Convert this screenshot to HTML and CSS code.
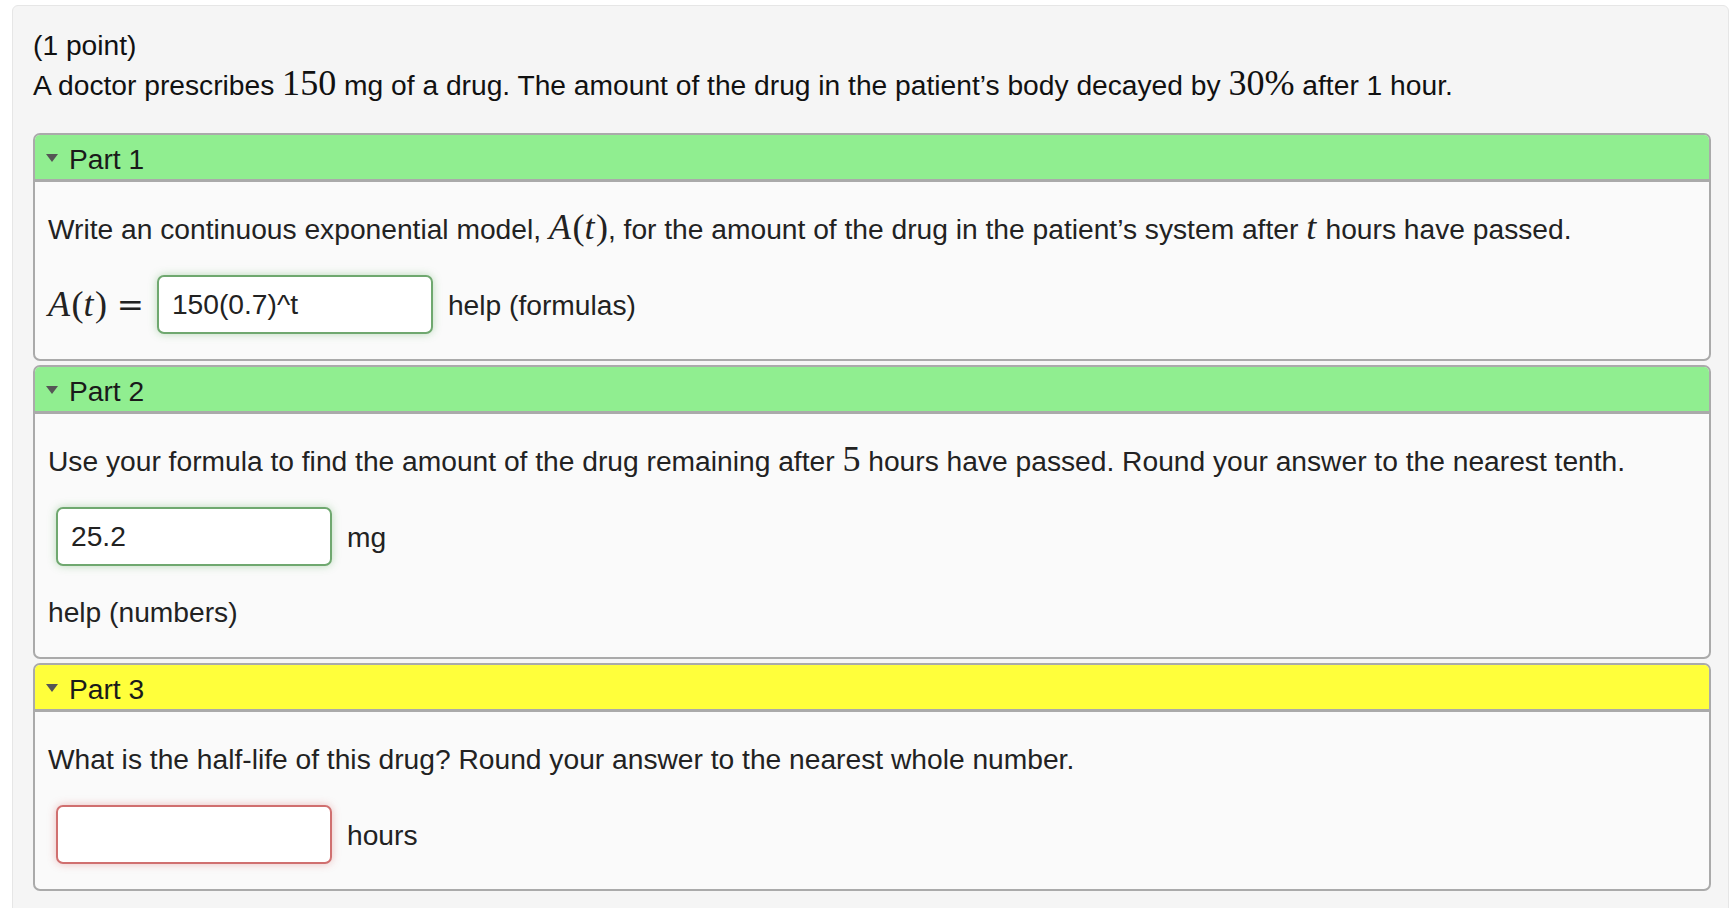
FILE: index.html
```html
<!DOCTYPE html>
<html lang="en">
<head>
<meta charset="utf-8">
<title>Problem</title>
<link rel="stylesheet" href="styles.css">
</head>
<body>
<div class="problem">
  <div class="intro">
    <div class="line">(1 point)</div>
    <div class="line">A doctor prescribes <span class="m">150</span> mg of a drug. The amount of the drug in the patient’s body decayed by <span class="m">30%</span> after 1 hour.</div>
  </div>

  <div class="section">
    <div class="sec-head green"><span class="tri"></span>Part 1</div>
    <div class="sec-body">
      <div class="line">Write an continuous exponential model, <span class="m"><i>A</i>(<i>t</i>)</span>, for the amount of the drug in the patient’s system after <span class="m"><i>t</i></span> hours have passed.</div>
      <div class="row">
        <span class="m lhs"><i>A</i>(<i>t</i>)<span class="eq">=</span></span>
        <input class="ans ok" type="text" value="150(0.7)^t" readonly>
        <span class="after">help (formulas)</span>
      </div>
    </div>
  </div>

  <div class="section">
    <div class="sec-head green"><span class="tri"></span>Part 2</div>
    <div class="sec-body">
      <div class="line">Use your formula to find the amount of the drug remaining after <span class="m">5</span> hours have passed. Round your answer to the nearest tenth.</div>
      <div class="row">
        <input class="ans ok indent" type="text" value="25.2" readonly>
        <span class="after">mg</span>
      </div>
      <div class="line">help (numbers)</div>
    </div>
  </div>

  <div class="section">
    <div class="sec-head yellow"><span class="tri"></span>Part 3</div>
    <div class="sec-body">
      <div class="line">What is the half-life of this drug? Round your answer to the nearest whole number.</div>
      <div class="row">
        <input class="ans bad indent" type="text" value="" readonly>
        <span class="after">hours</span>
      </div>
    </div>
  </div>
</div>
</body>
</html>
```

FILE: styles.css
```css
html, body {
  margin: 0;
  padding: 0;
  background: #ffffff;
}

body {
  font-family: "Liberation Sans", Arial, Helvetica, sans-serif;
  font-size: 28.2px;
  line-height: 40px;
  color: #222222;
}

.problem {
  margin: 5px 5px 0 12px;
  padding: 19px 17px 40px 20px;
  background: #f5f5f5;
  border: 1px solid #e6e6e6;
  border-radius: 6px;
  min-height: 900px;
  box-sizing: border-box;
}

.intro {
  margin-bottom: 28px;
}

.intro .line {
  color: #111111;
}

.line {
  height: 40px;
  white-space: nowrap;
}

.m {
  font-family: "Liberation Serif", "Times New Roman", serif;
  font-size: 1.28em;
  line-height: 0;
}

.m i {
  font-style: italic;
  padding-right: 0.04em;
}

.section {
  border: 2px solid #aaaaaa;
  border-radius: 7px;
  margin-bottom: 4px;
  background: #fafafa;
  overflow: hidden;
}

.sec-head {
  height: 47px;
  line-height: 40px;
  padding-top: 4px;
  box-sizing: border-box;
  border-bottom: 3px solid #aaaaaa;
  padding-left: 11px;
  display: flex;
  align-items: center;
  color: #1a1a1a;
}

.sec-head.green {
  background: #90ee90;
}

.sec-head.yellow {
  background: #ffff3b;
}

.tri {
  width: 0;
  height: 0;
  border-left: 6.5px solid transparent;
  border-right: 6.5px solid transparent;
  border-top: 8px solid #555555;
  margin-right: 11px;
  margin-top: -2px;
}

.sec-body {
  padding: 27px 13px 25px 13px;
  display: flex;
  flex-direction: column;
  gap: 26px;
}

.row {
  display: flex;
  align-items: center;
  height: 59px;
}

.lhs {
  line-height: 40px;
  margin-right: 13px;
}

.eq {
  font-family: "DejaVu Serif", "Liberation Serif", serif;
  font-size: 0.9em;
  margin-left: 0.3em;
}

.ans {
  box-sizing: border-box;
  width: 276px;
  height: 59px;
  border-radius: 7px;
  background: #ffffff;
  font-family: "Liberation Sans", Arial, Helvetica, sans-serif;
  font-size: 28.2px;
  color: #222222;
  padding: 0 13px;
  margin: 0;
  outline: none;
}

.ans.indent {
  margin-left: 8px;
}

.ans.ok {
  border: 2px solid #6fa86f;
  box-shadow: 0 0 9px rgba(70, 160, 70, 0.35);
}

.ans.bad {
  border: 2px solid #d06f6f;
  box-shadow: 0 0 9px rgba(210, 80, 80, 0.35);
}

.after {
  margin-left: 15px;
}
```
